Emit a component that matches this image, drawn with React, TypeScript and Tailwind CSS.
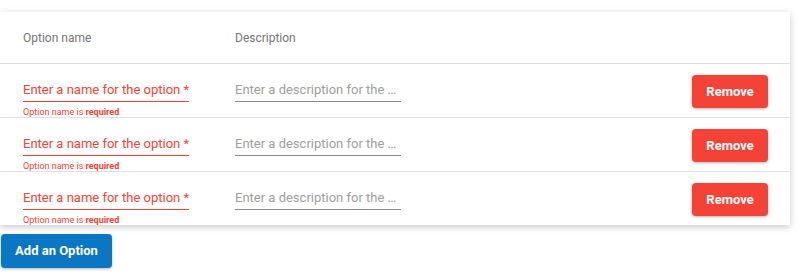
import React from 'react';

const rows = [1, 2, 3];

export default function App() {
  return (
    <div className="min-h-[276px] bg-white pt-3 font-['Roboto',sans-serif]">
      {/* Options table card */}
      <div className="w-[790px] bg-white shadow-[0_2px_7px_rgba(0,0,0,0.22)]">
        <div className="flex h-[51px] items-center text-[12px] text-[#757575]">
          <div className="w-[235px] pl-[23px]">Option name</div>
          <div>Description</div>
        </div>

        {rows.map((r) => (
          <div key={r} className="flex h-[54px] border-t border-[#e0e0e0] pl-[23px] pr-[22px]">
            <div className="w-[212px]">
              <div className="mt-[15px] w-[166px] whitespace-nowrap border-b border-[#f44336] text-[13px] leading-[22px] text-[#f44336]">
                Enter a name for the option *
              </div>
              <div className="mt-[4px] whitespace-nowrap text-[9px] leading-[12px] text-[#f44336]">
                Option name is <span className="font-bold">required</span>
              </div>
            </div>
            <div className="w-[166px]">
              <div className="mt-[15px] whitespace-nowrap border-b border-[#8a8a8a] text-[13px] leading-[22px] text-[#9e9e9e]">
                Enter a description for the …
              </div>
            </div>
            <div className="flex-1" />
            <button className="mt-[11px] h-[33px] w-[76px] self-start rounded-[4px] bg-[#f44336] text-[13px] font-bold text-white shadow-[0_1px_3px_rgba(0,0,0,0.3)]">
              Remove
            </button>
          </div>
        ))}
      </div>

      <button className="ml-px mt-[9px] h-[34px] w-[111px] rounded-[4px] bg-[#0a77c2] text-[13px] font-bold text-white shadow-[0_1px_3px_rgba(0,0,0,0.3)]">
        Add an Option
      </button>
    </div>
  );
}
